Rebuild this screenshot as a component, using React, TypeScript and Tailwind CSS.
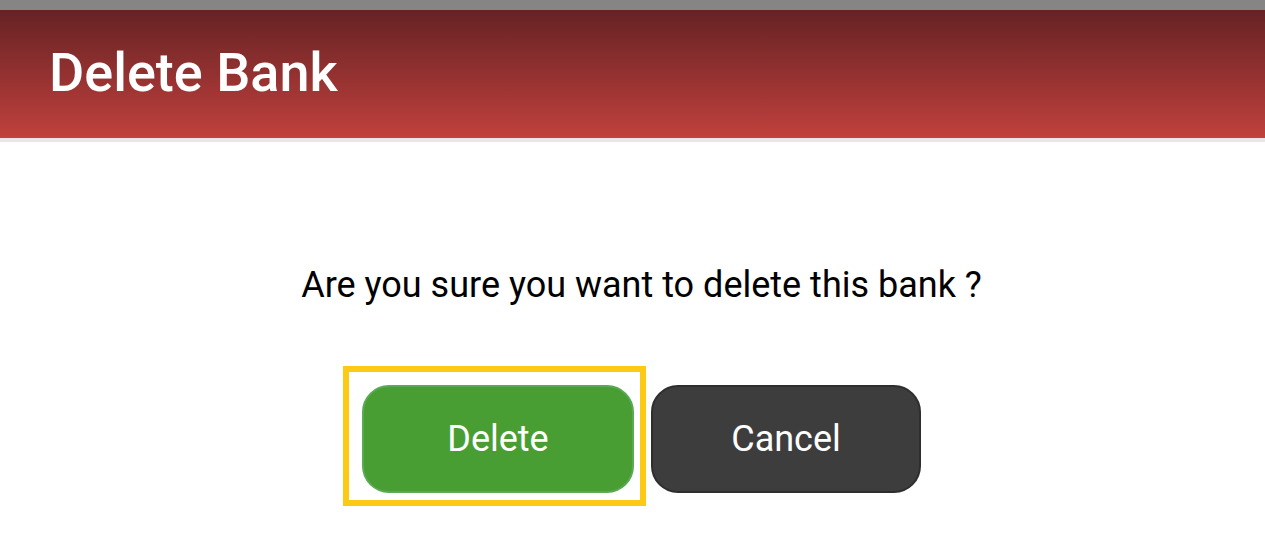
export default function App() {
  return (
    <div className="w-[1265px] h-[534px] bg-white flex flex-col font-['Roboto',sans-serif] overflow-hidden">
      <div className="h-[10px] bg-[#858585]" />
      <header className="h-[128px] bg-gradient-to-b from-[#672224] to-[#c1413d] flex items-center px-[49px]">
        <h1 className="text-white text-[54px] font-medium leading-none -mt-[2px]">Delete Bank</h1>
      </header>
      <div className="h-[4px] bg-[#ebe5e8]" />
      <main className="flex flex-col items-center pl-[18px]">
        <p className="mt-[125px] text-[36px] leading-none text-black">
          Are you sure you want to delete this bank ?
        </p>
        <div className="mt-[82px] flex gap-[17px]">
          <div className="relative">
            <button className="w-[272px] h-[108px] rounded-[27px] bg-[#489e32] border-2 border-[#5aa954] text-white text-[36px]">
              Delete
            </button>
            <div className="absolute -left-[19px] -top-[19px] w-[303px] h-[140px] border-[6px] border-[#fcc914] pointer-events-none" />
          </div>
          <button className="w-[270px] h-[108px] rounded-[27px] bg-[#3d3d3d] border-2 border-[#2e2e2e] text-white text-[36px]">
            Cancel
          </button>
        </div>
      </main>
    </div>
  );
}
